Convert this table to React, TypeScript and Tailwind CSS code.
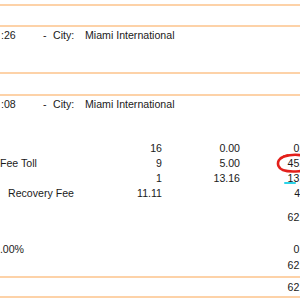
const Line = () => <div className="h-[2px] w-full shrink-0 bg-[#fdd2a8]" />;

function HeaderRow({ time }: { time: string }) {
  return (
    <div className="flex h-[16px] shrink-0 items-center whitespace-nowrap">
      <span className="w-[43px] shrink-0 pl-[1px]">{time}</span>
      <span className="w-[10px] shrink-0">-</span>
      <span className="w-[32px] shrink-0">City:</span>
      <span>Miami International</span>
    </div>
  );
}

type Row = { desc?: string; indent?: boolean; qty?: string; rate?: string; amt?: string; h?: string };

function TableRow({ desc, indent, qty, rate, amt, h = 'h-[15px]' }: Row) {
  return (
    <div className={`flex ${h} shrink-0 items-center whitespace-nowrap`}>
      <span className={`w-[120px] shrink-0 ${indent ? 'pl-[8px]' : ''}`}>{desc}</span>
      <span className="w-[42px] shrink-0 text-right">{qty}</span>
      <span className="w-[78px] shrink-0 text-right">{rate}</span>
      <span className="w-[74px] shrink-0 text-right">{amt}</span>
    </div>
  );
}

export default function App() {
  return (
    <div className="relative flex h-[300px] w-[300px] flex-col overflow-hidden bg-white font-['Liberation_Sans',Arial,sans-serif] text-[10.6px] leading-none text-[#1a1a1a]">
      <div className="h-[4px] shrink-0" />
      <Line />
      <div className="h-[19px] shrink-0" />
      <Line />
      <HeaderRow time=":26" />
      <div className="h-[29px] shrink-0" />
      <Line />
      <div className="h-[20px] shrink-0" />
      <Line />
      <HeaderRow time=":08" />
      <div className="h-[29px] shrink-0" />

      <TableRow qty="16" rate="0.00" amt="0.00" />
      <TableRow desc="Fee Toll" qty="9" rate="5.00" amt="45.00" />
      <TableRow qty="1" rate="13.16" amt="13.16" />
      <TableRow desc="Recovery Fee" indent qty="11.11" amt="4.11" />
      <div className="h-[8px] shrink-0" />
      <TableRow h="h-[16px]" amt="62.27" />
      <div className="h-[16px] shrink-0" />
      <div className="flex h-[16px] shrink-0 items-center whitespace-nowrap">
        <span className="-ml-[6px] w-[126px] shrink-0">0.00%</span>
        <span className="w-[194px] shrink-0 text-right">0.00</span>
      </div>
      <TableRow h="h-[16px]" amt="62.27" />
      <div className="h-[3px] shrink-0" />
      <Line />
      <TableRow h="h-[18px]" amt="62.27" />
      <Line />

      <svg className="absolute left-[258px] top-[150px] h-[28px] w-[42px]" viewBox="0 0 42 28" fill="none">
        <path
          d="M44 5.5 C37 4 31 5 26 6.5 C21 8 19 12 20.5 16 C22 20 28 21.5 35 21.5 C39 21.5 42 21 44 21"
          stroke="#e3201b"
          strokeWidth="2.6"
          strokeLinecap="round"
        />
        <path d="M30 5 C27 5.5 24.5 7 23 8.5" stroke="#e3201b" strokeWidth="1.8" strokeLinecap="round" />
      </svg>
      <div className="absolute left-[284px] top-[182px] h-[2px] w-[12px] rounded-full bg-[#2dd4e8]" />
    </div>
  );
}
